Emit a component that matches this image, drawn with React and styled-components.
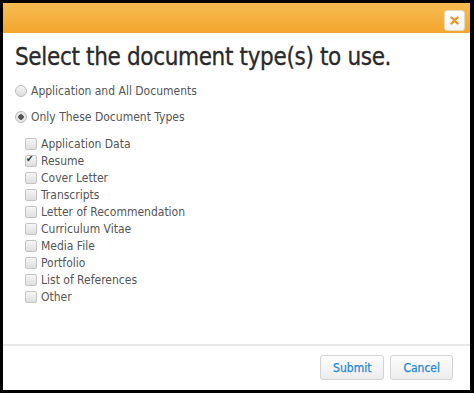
import React, { useState } from 'react'
import styled, { createGlobalStyle } from 'styled-components'

const GlobalStyle = createGlobalStyle`
  html, body {
    margin: 0;
    padding: 0;
    background: #000;
  }
`

const docTypes = [
  'Application Data',
  'Resume',
  'Cover Letter',
  'Transcripts',
  'Letter of Recommendation',
  'Curriculum Vitae',
  'Media File',
  'Portfolio',
  'List of References',
  'Other',
]

function App() {
  const [mode, setMode] = useState('only')
  const [checked, setChecked] = useState({ Resume: true })

  const toggle = (name) => setChecked((c) => ({ ...c, [name]: !c[name] }))

  return (
    <>
      <GlobalStyle />
      <Modal>
        <Header>
          <CloseButton aria-label="Close">
            <svg width="9" height="9" viewBox="0 0 9 9">
              <path d="M1.5 1.5 L7.5 7.5 M7.5 1.5 L1.5 7.5" stroke="#f0941f" strokeWidth="2.4" strokeLinecap="round" />
            </svg>
          </CloseButton>
        </Header>
        <Body>
          <Title>Select the document type(s) to use.</Title>
          <RadioRow onClick={() => setMode('all')}>
            <Radio $on={mode === 'all'} />
            Application and All Documents
          </RadioRow>
          <RadioRow onClick={() => setMode('only')}>
            <Radio $on={mode === 'only'} />
            Only These Document Types
          </RadioRow>
          <CheckList>
            {docTypes.map((name) => (
              <CheckRow key={name} onClick={() => toggle(name)}>
                <Box>{checked[name] && <Tick>✔</Tick>}</Box>
                {name}
              </CheckRow>
            ))}
          </CheckList>
        </Body>
        <Footer>
          <Button>Submit</Button>
          <Button>Cancel</Button>
        </Footer>
      </Modal>
    </>
  )
}

export default App

const Modal = styled.div`
  margin: 3px 4px 3px 3px;
  height: 387px;
  background: #fff;
  display: flex;
  flex-direction: column;
  font-family: 'DejaVu Sans Condensed', 'DejaVu Sans', sans-serif;
`

const Header = styled.div`
  height: 30px;
  flex-shrink: 0;
  background: linear-gradient(#f7bb52, #f3a62c);
  display: flex;
  align-items: center;
  justify-content: flex-end;
  padding-right: 5px;
  box-sizing: border-box;
`

const CloseButton = styled.button`
  width: 21px;
  height: 21px;
  margin-top: 4px;
  padding: 0;
  border: 1px solid #e8d9bd;
  border-radius: 3px;
  background: linear-gradient(#ffffff, #f4f4f4);
  display: flex;
  align-items: center;
  justify-content: center;
  cursor: pointer;
`

const Body = styled.div`
  flex: 1;
  padding: 8px 0 0 12px;
`

const Title = styled.h1`
  margin: 0 0 5px;
  font-size: 24px;
  font-weight: normal;
  color: #2a2a2a;
  letter-spacing: -0.35px;
  line-height: 32px;
  -webkit-text-stroke: 0.3px #2a2a2a;
`

const RadioRow = styled.div`
  display: flex;
  align-items: center;
  gap: 4px;
  height: 26px;
  font-size: 12px;
  color: #555;
  cursor: pointer;
`

const Radio = styled.span`
  width: 10px;
  height: 10px;
  border-radius: 50%;
  border: 1px solid #bdbdbd;
  background: ${(p) =>
    p.$on
      ? 'radial-gradient(circle, #555 0 2.5px, #e6e6e6 3px)'
      : 'linear-gradient(#f4f4f4, #dcdcdc)'};
`

const CheckList = styled.div`
  display: flex;
  flex-direction: column;
  padding: 5px 0 0 10px;
`

const CheckRow = styled.div`
  display: flex;
  align-items: center;
  gap: 4px;
  height: 17px;
  font-size: 12px;
  color: #555;
  cursor: pointer;
`

const Box = styled.span`
  position: relative;
  width: 10px;
  height: 10px;
  border: 1px solid #c4c4c4;
  border-radius: 2px;
  background: linear-gradient(#f6f6f6, #dedede);
`

const Tick = styled.span`
  position: absolute;
  left: 0;
  top: -3px;
  font-size: 10px;
  color: #333;
`

const Footer = styled.div`
  flex-shrink: 0;
  border-top: 2px solid #e8e8e8;
  display: flex;
  justify-content: flex-end;
  gap: 6px;
  padding: 9px 17px 10px 0;
`

const Button = styled.button`
  height: 25px;
  padding: 0 12px;
  border: 1px solid #d3d3d3;
  border-radius: 3px;
  background: linear-gradient(#fdfdfd, #ededed);
  color: #2687d2;
  font-family: 'DejaVu Sans Condensed', 'DejaVu Sans', sans-serif;
  font-size: 12px;
  -webkit-text-stroke: 0.25px #2687d2;
  cursor: pointer;
`
